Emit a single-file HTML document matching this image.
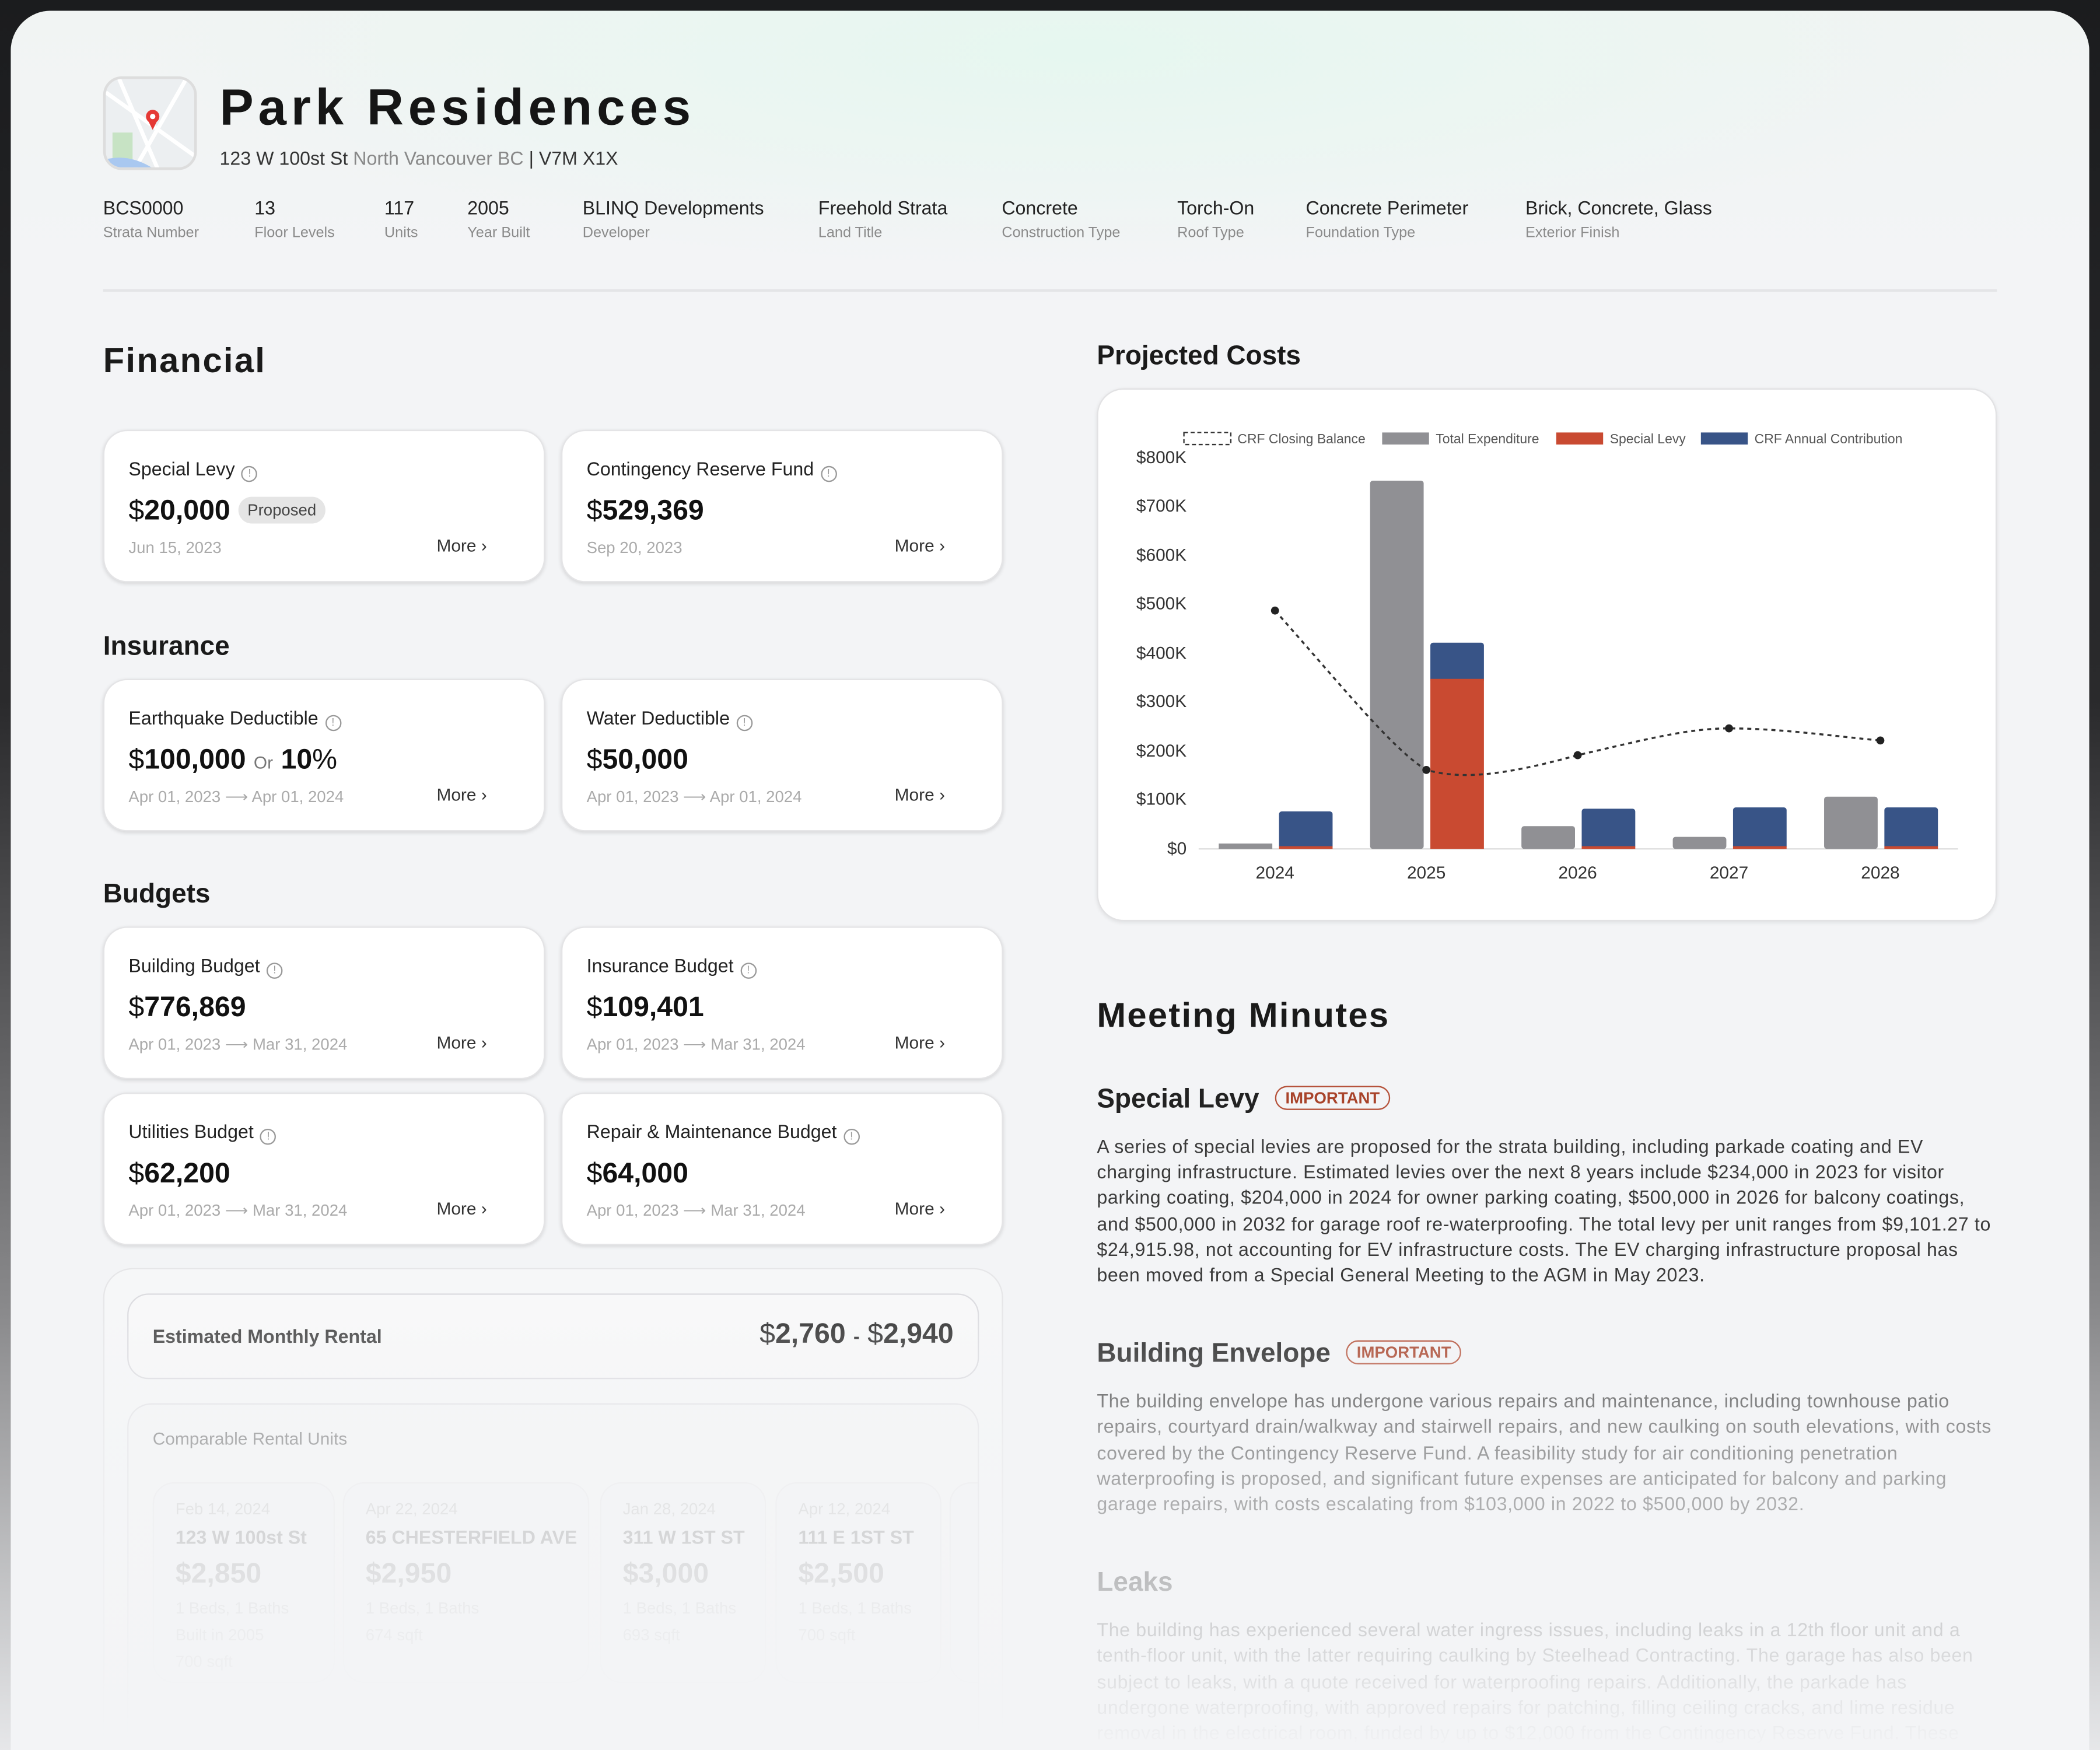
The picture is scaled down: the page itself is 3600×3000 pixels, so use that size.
<!DOCTYPE html>
<html><head><meta charset="utf-8"><style>
*{box-sizing:border-box;margin:0;padding:0}
html,body{width:3600px;height:3000px;overflow:hidden;background:#1b1c1e}
#s{position:absolute;left:0;top:0;width:1568px;height:1307px;transform:scale(2.29592,2.29536);transform-origin:0 0;font-family:"Liberation Sans",sans-serif;color:#1a1a1a;
background:linear-gradient(180deg,#1b1c1e 0%,#2a2a2c 40%,#8a8a8c 75%,#e6e7e9 100%)}
#p{position:absolute;left:8px;top:8px;width:1552px;height:1299px;border-radius:30px 30px 0 0;overflow:hidden;
background:radial-gradient(ellipse 700px 160px at 800px 30px,#e6f7f0 0%,rgba(230,247,240,0) 100%),linear-gradient(180deg,#f1f4f3 0%,#f3f4f6 200px,#f3f4f6 100%)}
.a{position:absolute}
.stat .v{font-size:14px;color:#222;white-space:nowrap}
.stat .l{font-size:11px;color:#8a8a8a;margin-top:5px;white-space:nowrap}
.card{position:absolute;width:330px;height:114px;background:#fff;border-radius:18px;box-shadow:0 1px 3px rgba(0,0,0,.12);border:1px solid #e4e4e6}
.card .t{position:absolute;left:18px;top:20px;font-size:14px;color:#222}
.card .t i{display:inline-block;width:12px;height:12px;border:1px solid #999;border-radius:50%;margin-left:5px;vertical-align:-1px;font-style:normal;font-size:8px;color:#999;text-align:center;line-height:10px}
.card .m{position:absolute;left:18px;top:48px;font-size:21px;font-weight:bold;color:#111}
.card .m span.d{font-weight:normal}
.card .dt{position:absolute;left:18px;top:80px;font-size:12px;color:#aaa}
.card .mo{position:absolute;left:248px;top:78px;font-size:13px;color:#333}
h2{position:absolute;font-size:20px;font-weight:bold;color:#1a1a1a}
.mm h3{font-size:20px;font-weight:bold;color:#222}
.tag{display:inline-block;font-size:12px;font-weight:bold;color:#a8432a;border:1.5px solid #b5523a;border-radius:10px;padding:1px 7px;margin-left:6px;vertical-align:3px}
.mm p{font-size:14px;line-height:19.2px;color:#3a3a3a;margin-top:14px;width:668px;letter-spacing:0.28px}
.ru{position:absolute;top:58px;height:150px;border:1px solid #ebebec;border-radius:16px;background:#f3f4f5;padding:12px 16px;color:#999}
.ru .d{font-size:12px;color:#ccc}.ru .n{font-size:14px;font-weight:bold;color:#999;margin-top:6px;white-space:nowrap}.ru .pr{font-size:21px;font-weight:bold;color:#aaa;margin-top:8px}.ru .x{font-size:12px;color:#ccc;margin-top:6px}
</style></head><body><div id="s"><div id="p">
<div class="a" style="left:69px;top:49px;width:70px;height:70px;border-radius:14px;border:2px solid #ddd;overflow:hidden;background:#eceff1">
<svg width="70" height="70"><g stroke="#fff" stroke-width="3"><line x1="0" y1="10" x2="70" y2="60"/><line x1="10" y1="0" x2="40" y2="70"/><line x1="60" y1="0" x2="20" y2="70"/></g><rect x="5" y="40" width="15" height="20" fill="#c7e3c4"/><path d="M0 60 Q20 55 40 70 L0 70Z" fill="#a9c8f0"/><circle cx="35" cy="28" r="5" fill="#e53935"/><path d="M31 30 L35 38 L39 30Z" fill="#e53935"/><circle cx="35" cy="28" r="2" fill="#fff"/></svg></div>
<div class="a" style="left:156px;top:52px;font-size:38px;font-weight:bold;letter-spacing:3.4px;color:#151515">Park Residences</div>
<div class="a" style="left:156px;top:102px;font-size:14px;color:#333">123 W 100st St <span style="color:#888">North Vancouver BC</span> | V7M X1X</div>
<div class="a stat" style="left:69px;top:139px"><div class="v">BCS0000</div><div class="l">Strata Number</div></div>
<div class="a stat" style="left:182px;top:139px"><div class="v">13</div><div class="l">Floor Levels</div></div>
<div class="a stat" style="left:279px;top:139px"><div class="v">117</div><div class="l">Units</div></div>
<div class="a stat" style="left:341px;top:139px"><div class="v">2005</div><div class="l">Year Built</div></div>
<div class="a stat" style="left:427px;top:139px"><div class="v">BLINQ Developments</div><div class="l">Developer</div></div>
<div class="a stat" style="left:603px;top:139px"><div class="v">Freehold Strata</div><div class="l">Land Title</div></div>
<div class="a stat" style="left:740px;top:139px"><div class="v">Concrete</div><div class="l">Construction Type</div></div>
<div class="a stat" style="left:871px;top:139px"><div class="v">Torch-On</div><div class="l">Roof Type</div></div>
<div class="a stat" style="left:967px;top:139px"><div class="v">Concrete Perimeter</div><div class="l">Foundation Type</div></div>
<div class="a stat" style="left:1131px;top:139px"><div class="v">Brick, Concrete, Glass</div><div class="l">Exterior Finish</div></div>
<div class="a" style="left:69px;top:208px;width:1414px;height:2px;background:#e4e5e7"></div>

<h2 style="left:69px;top:246px;font-size:26px;letter-spacing:1px">Financial</h2>
<div class="card" style="left:69px;top:313px"><div class="t">Special Levy<i>!</i></div><div class="m"><span class="d">$</span>20,000 <span style="font-size:12px;font-weight:normal;background:#e5e5e5;border-radius:10px;padding:3px 7px;vertical-align:3px;color:#444">Proposed</span></div><div class="dt">Jun 15, 2023</div><div class="mo">More ›</div></div>
<div class="card" style="left:411px;top:313px"><div class="t">Contingency Reserve Fund<i>!</i></div><div class="m"><span class="d">$</span>529,369</div><div class="dt">Sep 20, 2023</div><div class="mo">More ›</div></div>
<h2 style="left:69px;top:464px">Insurance</h2>
<div class="card" style="left:69px;top:499px"><div class="t">Earthquake Deductible<i>!</i></div><div class="m"><span class="d">$</span>100,000 <span style="font-size:13px;font-weight:normal;color:#777">Or</span> 10<span class="d">%</span></div><div class="dt">Apr 01, 2023 ⟶ Apr 01, 2024</div><div class="mo">More ›</div></div>
<div class="card" style="left:411px;top:499px"><div class="t">Water Deductible<i>!</i></div><div class="m"><span class="d">$</span>50,000</div><div class="dt">Apr 01, 2023 ⟶ Apr 01, 2024</div><div class="mo">More ›</div></div>
<h2 style="left:69px;top:649px">Budgets</h2>
<div class="card" style="left:69px;top:684px"><div class="t">Building Budget<i>!</i></div><div class="m"><span class="d">$</span>776,869</div><div class="dt">Apr 01, 2023 ⟶ Mar 31, 2024</div><div class="mo">More ›</div></div>
<div class="card" style="left:411px;top:684px"><div class="t">Insurance Budget<i>!</i></div><div class="m"><span class="d">$</span>109,401</div><div class="dt">Apr 01, 2023 ⟶ Mar 31, 2024</div><div class="mo">More ›</div></div>
<div class="card" style="left:69px;top:808px"><div class="t">Utilities Budget<i>!</i></div><div class="m"><span class="d">$</span>62,200</div><div class="dt">Apr 01, 2023 ⟶ Mar 31, 2024</div><div class="mo">More ›</div></div>
<div class="card" style="left:411px;top:808px"><div class="t">Repair &amp; Maintenance Budget<i>!</i></div><div class="m"><span class="d">$</span>64,000</div><div class="dt">Apr 01, 2023 ⟶ Mar 31, 2024</div><div class="mo">More ›</div></div>

<div class="a" style="left:69px;top:939px;width:672px;height:400px;border-radius:22px;border:1px solid #e6e6e8;background:#f6f7f8">
<div class="a" style="left:17px;top:18px;width:636px;height:64px;border:1px solid #dcdce0;border-radius:16px;background:#f8f8f9">
<div class="a" style="left:18px;top:23px;font-size:14px;font-weight:bold;color:#444">Estimated Monthly Rental</div>
<div class="a" style="right:18px;top:18px;font-size:21px;font-weight:bold;color:#333"><span style="font-weight:normal">$</span>2,760 <span style="font-size:14px">-</span> <span style="font-weight:normal">$</span>2,940</div></div>
<div class="a" style="left:17px;top:100px;width:636px;height:300px;border:1px solid #e2e2e5;border-radius:18px;background:#f5f6f7;overflow:hidden">
<div class="a" style="left:18px;top:18px;font-size:13px;color:#666">Comparable Rental Units</div>
<div class="ru" style="left:18px;width:136px"><div class="d">Feb 14, 2024</div><div class="n">123 W 100st St</div><div class="pr">$2,850</div><div class="x">1 Beds, 1 Baths</div><div class="x">Built in 2005</div><div class="x">700 sqft</div></div>
<div class="ru" style="left:160px;width:184px"><div class="d">Apr 22, 2024</div><div class="n">65 CHESTERFIELD AVE</div><div class="pr">$2,950</div><div class="x">1 Beds, 1 Baths</div><div class="x">674 sqft</div></div>
<div class="ru" style="left:352px;width:124px"><div class="d">Jan 28, 2024</div><div class="n">311 W 1ST ST</div><div class="pr">$3,000</div><div class="x">1 Beds, 1 Baths</div><div class="x">693 sqft</div></div>
<div class="ru" style="left:483px;width:124px"><div class="d">Apr 12, 2024</div><div class="n">111 E 1ST ST</div><div class="pr">$2,500</div><div class="x">1 Beds, 1 Baths</div><div class="x">700 sqft</div></div>
<div class="ru" style="left:613px;width:60px"></div>
</div></div>

<h2 style="left:811px;top:247px">Projected Costs</h2>
<div class="a" style="left:811px;top:282px;width:672px;height:398px;background:#fff;border-radius:20px;border:1px solid #e2e2e4;box-shadow:0 1px 3px rgba(0,0,0,.08)"></div>
<svg class="a" style="left:0;top:0" width="1552" height="700" font-family="Liberation Sans,sans-serif">
<g transform="translate(-8,-8)">
<g font-size="10" fill="#555"><rect x="884" y="323" width="35" height="9" fill="none" stroke="#333" stroke-dasharray="3,2"/><text x="924" y="331">CRF Closing Balance</text>
<rect x="1032" y="323" width="35" height="9" fill="#909094"/><text x="1072" y="331">Total Expenditure</text>
<rect x="1162" y="323" width="35" height="9" fill="#c94a31"/><text x="1202" y="331">Special Levy</text>
<rect x="1270" y="323" width="35" height="9" fill="#385487"/><text x="1310" y="331">CRF Annual Contribution</text></g>
<g font-size="13" fill="#333" text-anchor="end"><text x="886" y="346">$800K</text><text x="886" y="382">$700K</text><text x="886" y="419">$600K</text><text x="886" y="455">$500K</text><text x="886" y="492">$400K</text><text x="886" y="528">$300K</text><text x="886" y="565">$200K</text><text x="886" y="601">$100K</text><text x="886" y="638">$0</text></g>
<line x1="895" y1="634" x2="1462" y2="634" stroke="#ddd"/>
<g font-size="13" fill="#333" text-anchor="middle"><text x="952" y="656">2024</text><text x="1065" y="656">2025</text><text x="1178" y="656">2026</text><text x="1291" y="656">2027</text><text x="1404" y="656">2028</text></g>
<g fill="#909094"><rect x="910" y="630" width="40" height="4"/><rect x="1023" y="359" width="40" height="275" rx="2"/><rect x="1136" y="617" width="40" height="17" rx="2"/><rect x="1249" y="625" width="40" height="9" rx="2"/><rect x="1362" y="595" width="40" height="39" rx="2"/></g>
<g fill="#385487"><rect x="955" y="606" width="40" height="28" rx="2"/><rect x="1068" y="480" width="40" height="30" rx="2"/><rect x="1181" y="604" width="40" height="30" rx="2"/><rect x="1294" y="603" width="40" height="31" rx="2"/><rect x="1407" y="603" width="40" height="31" rx="2"/></g>
<g fill="#c94a31"><rect x="1068" y="507" width="40" height="127"/><rect x="955" y="632" width="40" height="2"/><rect x="1181" y="632" width="40" height="2"/><rect x="1294" y="632" width="40" height="2"/><rect x="1407" y="632" width="40" height="2"/></g>
<path d="M952 456 C1000 510,1040 560,1065 575 C1090 582,1120 580,1178 564 C1230 552,1260 544,1291 544 C1330 544,1370 550,1404 553" fill="none" stroke="#333" stroke-width="1.5" stroke-dasharray="3,3"/>
<g fill="#222"><circle cx="952" cy="456" r="3"/><circle cx="1065" cy="575" r="3"/><circle cx="1178" cy="564" r="3"/><circle cx="1291" cy="544" r="3"/><circle cx="1404" cy="553" r="3"/></g>
</g></svg>

<h2 style="left:811px;top:735px;font-size:26px;letter-spacing:1px">Meeting Minutes</h2>
<div class="a mm" style="left:811px;top:802px">
<h3>Special Levy <span class="tag">IMPORTANT</span></h3>
<p>A series of special levies are proposed for the strata building, including parkade coating and EV charging infrastructure. Estimated levies over the next 8 years include $234,000 in 2023 for visitor parking coating, $204,000 in 2024 for owner parking coating, $500,000 in 2026 for balcony coatings, and $500,000 in 2032 for garage roof re-waterproofing. The total levy per unit ranges from $9,101.27 to $24,915.98, not accounting for EV infrastructure costs. The EV charging infrastructure proposal has been moved from a Special General Meeting to the AGM in May 2023.</p>
<h3 style="margin-top:38px">Building Envelope <span class="tag">IMPORTANT</span></h3>
<p>The building envelope has undergone various repairs and maintenance, including townhouse patio repairs, courtyard drain/walkway and stairwell repairs, and new caulking on south elevations, with costs covered by the Contingency Reserve Fund. A feasibility study for air conditioning penetration waterproofing is proposed, and significant future expenses are anticipated for balcony and parking garage repairs, with costs escalating from $103,000 in 2022 to $500,000 by 2032.</p>
<h3 style="margin-top:38px">Leaks</h3>
<p>The building has experienced several water ingress issues, including leaks in a 12th floor unit and a tenth-floor unit, with the latter requiring caulking by Steelhead Contracting. The garage has also been subject to leaks, with a quote received for waterproofing repairs. Additionally, the parkade has undergone waterproofing, with approved repairs for patching, filling ceiling cracks, and lime residue removal in the electrical room, funded by up to $12,000 from the Contingency Reserve Fund. These</p>
</div>
<div class="a" style="left:0;top:960px;width:1552px;height:340px;background:linear-gradient(180deg,rgba(243,244,246,0) 0%,rgba(243,244,246,.5) 30%,rgba(243,244,246,.8) 70%,#f3f4f6 100%)"></div>
</div></div></body></html>
